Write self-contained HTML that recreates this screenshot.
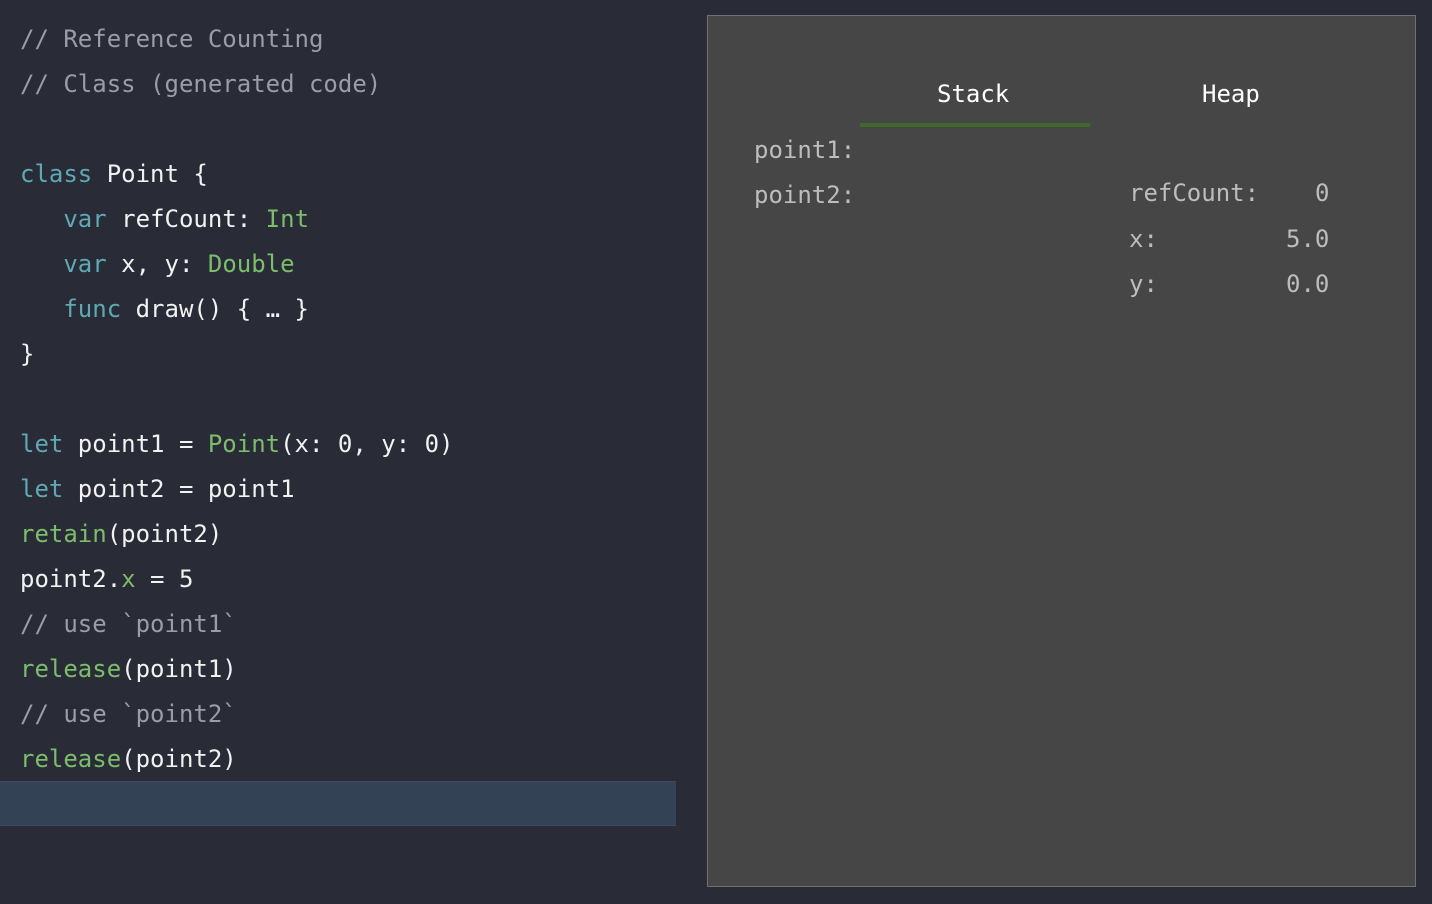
<!DOCTYPE html>
<html><head><meta charset="utf-8"><style>
html,body{margin:0;padding:0;width:1432px;height:904px;overflow:hidden;background:#292b37;}
body{position:relative;font-family:"DejaVu Sans Mono","Liberation Mono",monospace;}
.code{position:absolute;left:20px;top:17px;font-size:24px;line-height:45px;color:#f2f2f2;white-space:pre;}
.k{color:#5ea9b3}.g{color:#7cbd6c}.c{color:#9b9ca8}
.hl{position:absolute;left:0;top:781px;width:676px;height:45px;background:#344256;border-top:1px solid #3d4b60;border-bottom:1px solid #3d4b60;box-sizing:border-box;}
.panel{position:absolute;left:707px;top:15px;width:709px;height:872px;background:#464646;border:1px solid #707070;box-sizing:border-box;}
.t{position:absolute;font-size:24px;white-space:pre;color:#bdbdbd;line-height:30px;}
.h{color:#fff;}
.ul{position:absolute;left:152px;top:107px;width:230px;height:4px;background:#3b6a2c;}
</style></head><body>
<div class="code"><span class="c">// Reference Counting</span>
<span class="c">// Class (generated code)</span>

<span class="k">class</span> Point {
   <span class="k">var</span> refCount: <span class="g">Int</span>
   <span class="k">var</span> x, y: <span class="g">Double</span>
   <span class="k">func</span> draw() { … }
}

<span class="k">let</span> point1 = <span class="g">Point</span>(x: 0, y: 0)
<span class="k">let</span> point2 = point1
<span class="g">retain</span>(point2)
point2.<span class="g">x</span> = 5
<span class="c">// use `point1`</span>
<span class="g">release</span>(point1)
<span class="c">// use `point2`</span>
<span class="g">release</span>(point2)</div>
<div class="hl"></div>
<div class="panel">
<div class="t h" style="left:229px;top:63px;">Stack</div>
<div class="t h" style="left:494px;top:63px;">Heap</div>
<div class="ul"></div>
<div class="t" style="left:46px;top:119px;">point1:</div>
<div class="t" style="left:46px;top:164px;">point2:</div>
<div class="t" style="left:421px;top:162px;">refCount:</div>
<div class="t" style="left:607px;top:162px;">0</div>
<div class="t" style="left:421px;top:208px;">x:</div>
<div class="t" style="left:578px;top:208px;">5.0</div>
<div class="t" style="left:421px;top:253px;">y:</div>
<div class="t" style="left:578px;top:253px;">0.0</div>
</div>
</body></html>
